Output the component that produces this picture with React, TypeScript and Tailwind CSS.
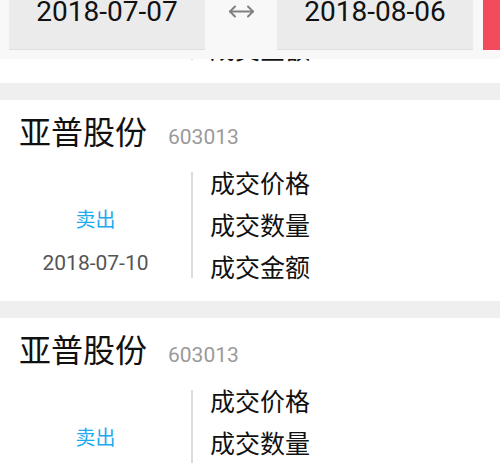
const font = { fontFamily: 'Roboto, "Noto Sans CJK SC", sans-serif' };

function TradeCard() {
  return (
    <div className="bg-white h-[201px]">
      <div className="pt-[12px] pl-[19px] flex items-baseline">
        <span className="text-[32px] leading-[42px] text-[#111]">亚普股份</span>
        <span className="ml-[21px] text-[21px] text-[#9a9a9a]">603013</span>
      </div>
      <div className="flex mt-[18px]">
        <div className="w-[191px] flex flex-col items-center">
          <span className="mt-[34px] text-[20px] leading-[28px] text-[#1eaaf1]">卖出</span>
          <span className="mt-[15px] text-[21px] leading-[28px] text-[#555]">2018-07-10</span>
        </div>
        <div className="w-[2px] h-[106px] bg-[#dcdcdc]" />
        <div className="pl-[17px] flex flex-col text-[25px] leading-[42px] text-[#111] -mt-[8px]">
          <span>成交价格</span>
          <span>成交数量</span>
          <span>成交金额</span>
        </div>
      </div>
    </div>
  );
}

export default function App() {
  return (
    <div className="relative w-[500px] h-[463px] overflow-hidden bg-[#efefef]" style={font}>
      <div className="-mt-[118px] flex flex-col gap-[17px]">
        <TradeCard />
        <TradeCard />
        <TradeCard />
      </div>

      <div className="absolute top-0 left-0 right-0 h-[59px] bg-[#f8f8f8] flex">
        <div className="ml-[9px] w-[196px] h-[50px] bg-[#ebebeb] border-b border-[#dedede] flex justify-center">
          <span className="-mt-[2px] text-[28px] leading-[28px] text-[#111]">2018-07-07</span>
        </div>
        <div className="w-[72px] flex justify-center pt-[5px]">
          <svg width="27" height="13" viewBox="0 0 27 13" fill="none" stroke="#808080" strokeWidth="2" strokeLinecap="round" strokeLinejoin="round">
            <path d="M2 6.5h23" />
            <path d="M7 1.5l-5 5 5 5" />
            <path d="M20 1.5l5 5-5 5" />
          </svg>
        </div>
        <div className="w-[196px] h-[50px] bg-[#ebebeb] border-b border-[#dedede] flex justify-center">
          <span className="-mt-[2px] text-[28px] leading-[28px] text-[#111]">2018-08-06</span>
        </div>
        <div className="ml-[10px] flex-1 h-[50px] bg-[#f24b5b]" />
      </div>
    </div>
  );
}
